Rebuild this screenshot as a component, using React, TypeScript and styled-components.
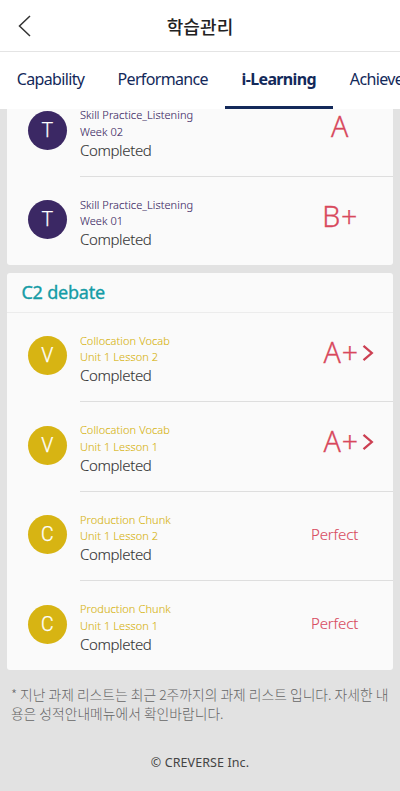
import React from "react";
import styled, { createGlobalStyle } from "styled-components";

const GlobalStyle = createGlobalStyle`
  * { box-sizing: border-box; }
  body {
    margin: 0;
    background: #e2e2e2;
    font-family: "Noto Sans", "Noto Sans CJK KR", sans-serif;
  }
`;

const Screen = styled.div`
  width: 400px;
  height: 791px;
  overflow: hidden;
  display: flex;
  flex-direction: column;
  background: #e2e2e2;
`;

const Header = styled.header`
  flex: none;
  height: 52px;
  display: grid;
  grid-template-columns: 50px 1fr 50px;
  align-items: center;
  background: #fff;
  border-bottom: 1px solid #e4e4e4;
`;

const BackButton = styled.button`
  border: 0;
  padding: 1px 0 0 18px;
  background: none;
  display: flex;
`;

const PageTitle = styled.h1`
  margin: 0;
  text-align: center;
  font: 500 18px/26px "Noto Sans CJK KR", sans-serif;
  letter-spacing: 0.1px;
  color: #222;
`;

const Tabs = styled.nav`
  flex: none;
  height: 57px;
  display: flex;
  overflow: hidden;
  background: #fff;
`;

const Tab = styled.a<{ $width: number; $active?: boolean }>`
  flex: none;
  width: ${(p) => p.$width}px;
  text-align: center;
  font-size: 16px;
  line-height: 55px;
  letter-spacing: -0.65px;
  font-weight: ${(p) => (p.$active ? 700 : 400)};
  color: #13295a;
  border-bottom: 3px solid ${(p) => (p.$active ? "#13295a" : "transparent")};
`;

const Content = styled.main`
  flex: 1;
  min-height: 0;
  overflow: hidden;
  padding: 0 7.4px;
`;

const Card = styled.section<{ $scrolled?: boolean }>`
  margin-top: ${(p) => (p.$scrolled ? "-22px" : "7.5px")};
  background: #fafafa;
  border-radius: 3px;
`;

const CardTitle = styled.h2`
  margin: 0;
  height: 40px;
  padding-left: 14px;
  font-size: 18px;
  line-height: 39px;
  font-weight: 400;
  letter-spacing: -0.2px;
  -webkit-text-stroke: 0.35px currentColor;
  color: #159ca6;
  border-bottom: 1px solid #ececec;
`;

const Row = styled.div`
  height: 89.5px;
  display: flex;
  padding-left: 20.5px;
  &:last-child {
    height: 88.5px;
  }
`;

const Badge = styled.div<{ $color: string }>`
  flex: none;
  width: 39px;
  height: 39px;
  margin: 23.5px 13px 0 0;
  border-radius: 50%;
  background: ${(p) => p.$color};
  color: #fff;
  text-align: center;
  font: 300 19.5px/40px Roboto, sans-serif;
  -webkit-text-stroke: 0.25px currentColor;
`;

const RowBody = styled.div`
  flex: 1;
  display: flex;
  justify-content: space-between;
  ${Row}:not(:last-child) & {
    border-bottom: 1px solid #dedede;
  }
`;

const Details = styled.div`
  padding-top: 20.4px;
`;

const Lesson = styled.div<{ $color: string }>`
  font-size: 11px;
  line-height: 16.3px;
  font-weight: 300;
  letter-spacing: 0.08px;
  -webkit-text-stroke: 0.1px currentColor;
  color: ${(p) => p.$color};
`;

const Status = styled.div`
  font-size: 15px;
  line-height: 21.6px;
  font-weight: 300;
  letter-spacing: -0.35px;
  -webkit-text-stroke: 0.1px currentColor;
  color: #333;
`;

const Result = styled.div<{ $linked?: boolean }>`
  display: flex;
  align-items: center;
  padding: 0 ${(p) => (p.$linked ? 18.5 : 34.5)}px 8px 0;
  color: #d8485c;
  font-weight: 300;
`;

const Grade = styled.span`
  min-width: 36px;
  margin-top: -2px;
  text-align: center;
  font-size: 28.5px;
  line-height: 40px;
  letter-spacing: 0.8px;
  -webkit-text-stroke: 0.3px currentColor;
`;

const Remark = styled.span`
  margin-top: 4px;
  font-size: 15px;
  line-height: 24px;
  letter-spacing: -0.15px;
  -webkit-text-stroke: 0.1px currentColor;
`;

const Arrow = styled.svg`
  margin-left: 3px;
`;

const Note = styled.p`
  margin: 15px 0 0 3.5px;
  font: 300 13.8px/19px "Noto Sans CJK KR", sans-serif;
  word-break: break-all;
  color: #666;
`;

const Copyright = styled.footer`
  margin-top: 30px;
  text-align: center;
  font-size: 12.5px;
  line-height: 20px;
  letter-spacing: 0.1px;
  color: #444;
`;

const PURPLE = "#3b2864";
const GOLD = "#d7b413";

type Task = {
  letter: string;
  title: string;
  unit: string;
  result: string;
  linked?: boolean;
};

const skills: Task[] = [
  { letter: "T", title: "Skill Practice_Listening", unit: "Week 02", result: "A" },
  { letter: "T", title: "Skill Practice_Listening", unit: "Week 01", result: "B+" },
];

const debate: Task[] = [
  { letter: "V", title: "Collocation Vocab", unit: "Unit 1 Lesson 2", result: "A+", linked: true },
  { letter: "V", title: "Collocation Vocab", unit: "Unit 1 Lesson 1", result: "A+", linked: true },
  { letter: "C", title: "Production Chunk", unit: "Unit 1 Lesson 2", result: "Perfect" },
  { letter: "C", title: "Production Chunk", unit: "Unit 1 Lesson 1", result: "Perfect" },
];

function TaskRow({ task, color }: { task: Task; color: string }) {
  return (
    <Row>
      <Badge $color={color}>{task.letter}</Badge>
      <RowBody>
        <Details>
          <Lesson $color={color}>{task.title}</Lesson>
          <Lesson $color={color}>{task.unit}</Lesson>
          <Status>Completed</Status>
        </Details>
        <Result $linked={task.linked}>
          {task.result === "Perfect" ? <Remark>{task.result}</Remark> : <Grade>{task.result}</Grade>}
          {task.linked && (
            <Arrow width="12" height="18" viewBox="0 0 12 18" fill="none" stroke="#cc3f52" strokeWidth="2.3">
              <path d="M1.5 1.8L9.8 9L1.5 16.2" />
            </Arrow>
          )}
        </Result>
      </RowBody>
    </Row>
  );
}

export default function App() {
  return (
    <>
      <GlobalStyle />
      <Screen>
        <Header>
          <BackButton aria-label="Back">
            <svg width="14" height="22" viewBox="0 0 14 22" fill="none" stroke="#333" strokeWidth="1.5">
              <path d="M12 1L1.5 11L12 21" />
            </svg>
          </BackButton>
          <PageTitle>학습관리</PageTitle>
        </Header>
        <Tabs>
          <Tab $width={101}>Capability</Tab>
          <Tab $width={123.5}>Performance</Tab>
          <Tab $width={108.5} $active>i-Learning</Tab>
          <Tab $width={124}>Achievement</Tab>
        </Tabs>
        <Content>
          <Card $scrolled>
            {skills.map((t) => <TaskRow key={t.unit} task={t} color={PURPLE} />)}
          </Card>
          <Card>
            <CardTitle>C2 debate</CardTitle>
            {debate.map((t) => <TaskRow key={t.title + t.unit} task={t} color={GOLD} />)}
          </Card>
          <Note>* 지난 과제 리스트는 최근 2주까지의 과제 리스트 입니다. 자세한 내용은 성적안내메뉴에서 확인바랍니다.</Note>
          <Copyright>© CREVERSE Inc.</Copyright>
        </Content>
      </Screen>
    </>
  );
}
